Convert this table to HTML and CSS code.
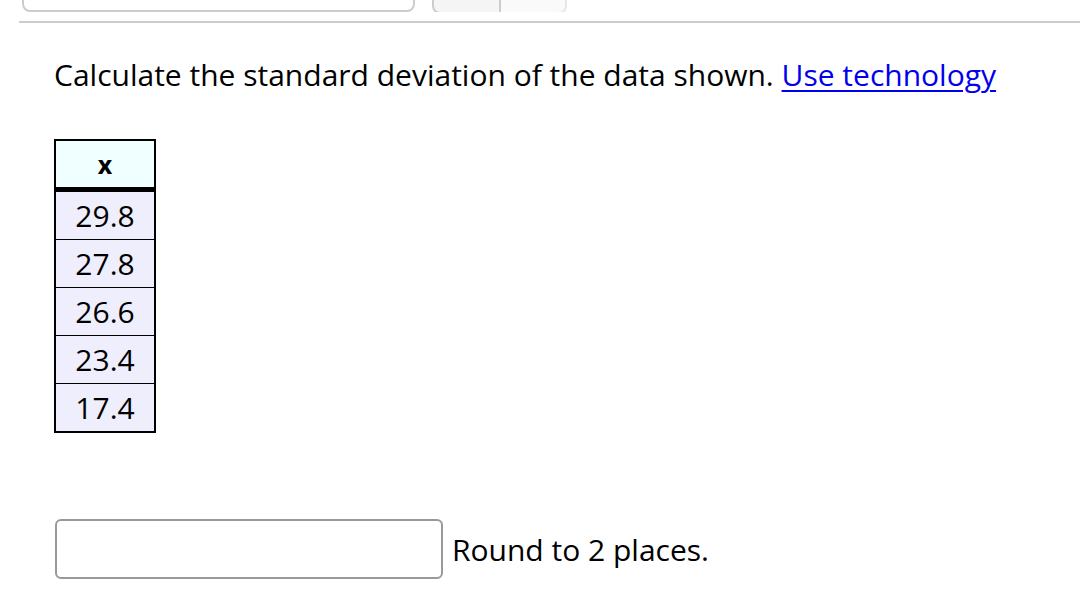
FILE: index.html
```html
<!DOCTYPE html>
<html>
<head>
<meta charset="utf-8">
<link rel="stylesheet" href="styles.css">
</head>
<body>
<div class="toolbar">
  <div class="field"></div>
  <div class="btn-group">
    <div class="btn btn-left"></div>
    <div class="btn btn-right"></div>
  </div>
</div>
<div class="rule"></div>
<div class="content">
  <p class="question">Calculate the standard deviation of the data shown. <a href="#" class="link">Use technology</a></p>
  <table class="data">
    <thead><tr><th>x</th></tr></thead>
    <tbody>
      <tr><td>29.8</td></tr>
      <tr><td>27.8</td></tr>
      <tr><td>26.6</td></tr>
      <tr><td>23.4</td></tr>
      <tr><td>17.4</td></tr>
    </tbody>
  </table>
  <div class="answer">
    <div class="answer-box"></div>
    <span class="hint">Round to 2 places.</span>
  </div>
</div>
</body>
</html>
```
FILE: styles.css
```css
html, body {
  margin: 0;
  padding: 0;
  background: #fff;
  font-family: "Open Sans", "Liberation Sans", sans-serif;
  color: #000;
}
.toolbar {
  height: 12px;
  display: flex;
  align-items: flex-end;
  overflow: hidden;
  padding-left: 22px;
}
.field {
  width: 389px;
  height: 30px;
  border: 2px solid #cccccc;
  border-radius: 8px;
  flex: none;
}
.btn-group {
  display: flex;
  margin-left: 17px;
  height: 32px;
}
.btn {
  height: 30px;
  border: 2px solid #cccccc;
}
.btn-left {
  width: 65px;
  background: #f5f5f5;
  border-radius: 0 0 0 8px;
}
.btn-right {
  width: 64px;
  border-color: #e6e6e6;
  border-left: none;
  border-radius: 0 0 8px 0;
  background: #fafafa;
}
.rule {
  height: 2px;
  background: #cccccc;
  margin: 9px 0 0 19px;
}
.content {
  padding-left: 54px;
}
.question {
  margin: 34px 0 0 0;
  font-size: 30px;
  line-height: 36px;
}
.link {
  color: #0000ee;
  text-decoration: underline;
  text-underline-offset: 4px;
  text-decoration-thickness: 2px;
}
.data {
  border-collapse: collapse;
  margin-top: 46px;
  width: 102px;
}
.data th {
  background: #f0ffff;
  border: 2px solid #000;
  border-bottom: 5px solid #000;
  height: 46px;
  font-size: 25px;
  font-weight: bold;
  padding: 0;
  text-align: center;
  line-height: 1;
}
.data td {
  background: #eeeefc;
  border: 1px solid #000;
  border-left: 2px solid #000;
  border-right: 2px solid #000;
  height: 47px;
  font-size: 30px;
  text-align: center;
  padding: 0;
  line-height: 1;
}
.data tbody tr:last-child td {
  border-bottom: 2px solid #000;
}
.answer {
  display: flex;
  align-items: center;
  margin-top: 86px;
}
.answer-box {
  width: 384px;
  height: 56px;
  border: 2px solid #999999;
  border-radius: 6px;
  margin-left: 1px;
}
.hint {
  font-size: 30px;
  margin-left: 9px;
}
```
